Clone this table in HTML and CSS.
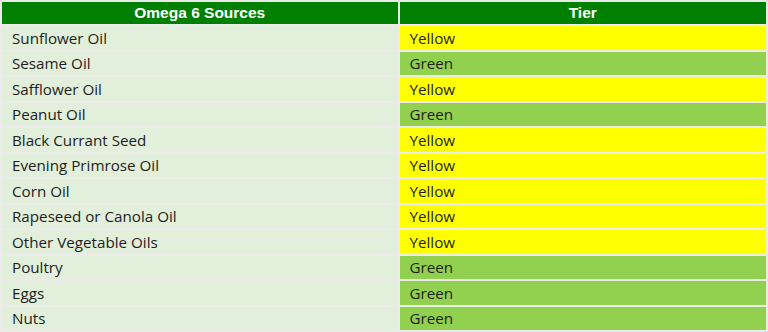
FILE: index.html
```html
<!DOCTYPE html>
<html>
<head>
<meta charset="utf-8">
<link rel="stylesheet" href="styles.css">
</head>
<body>
<table class="tiers">
  <thead>
    <tr><th class="src-col">Omega 6 Sources</th><th class="tier-col">Tier</th></tr>
  </thead>
  <tbody>
    <tr><td class="src">Sunflower Oil</td><td class="yellow">Yellow</td></tr>
    <tr><td class="src">Sesame Oil</td><td class="green">Green</td></tr>
    <tr><td class="src">Safflower Oil</td><td class="yellow">Yellow</td></tr>
    <tr><td class="src">Peanut Oil</td><td class="green">Green</td></tr>
    <tr><td class="src">Black Currant Seed</td><td class="yellow">Yellow</td></tr>
    <tr><td class="src">Evening Primrose Oil</td><td class="yellow">Yellow</td></tr>
    <tr><td class="src">Corn Oil</td><td class="yellow">Yellow</td></tr>
    <tr><td class="src">Rapeseed or Canola Oil</td><td class="yellow">Yellow</td></tr>
    <tr><td class="src">Other Vegetable Oils</td><td class="yellow">Yellow</td></tr>
    <tr><td class="src">Poultry</td><td class="green">Green</td></tr>
    <tr><td class="src">Eggs</td><td class="green">Green</td></tr>
    <tr><td class="src">Nuts</td><td class="green">Green</td></tr>
  </tbody>
</table>
</body>
</html>
```
FILE: styles.css
```css
html, body {
  margin: 0;
  padding: 0;
  background: #ebebeb;
}
.tiers {
  width: 768px;
  border-collapse: separate;
  border-spacing: 2px 2px;
  table-layout: fixed;
}
.src-col { width: 395px; }
.tier-col { width: 366px; }
th {
  background: #008000;
  color: #fff;
  font-family: "Liberation Sans", Arial, sans-serif;
  font-weight: bold;
  font-size: 15.5px;
  height: 22px;
  padding: 0;
  text-align: center;
}
td {
  font-family: "Open Sans", "Noto Sans", sans-serif;
  font-size: 15.2px;
  color: #1e1e1e;
  height: 23.5px;
  padding: 0 0 0 10px;
  text-align: left;
  box-sizing: border-box;
}
.src { background: #e2efda; }
.yellow { background: #ffff00; }
.green { background: #92d050; }
```
